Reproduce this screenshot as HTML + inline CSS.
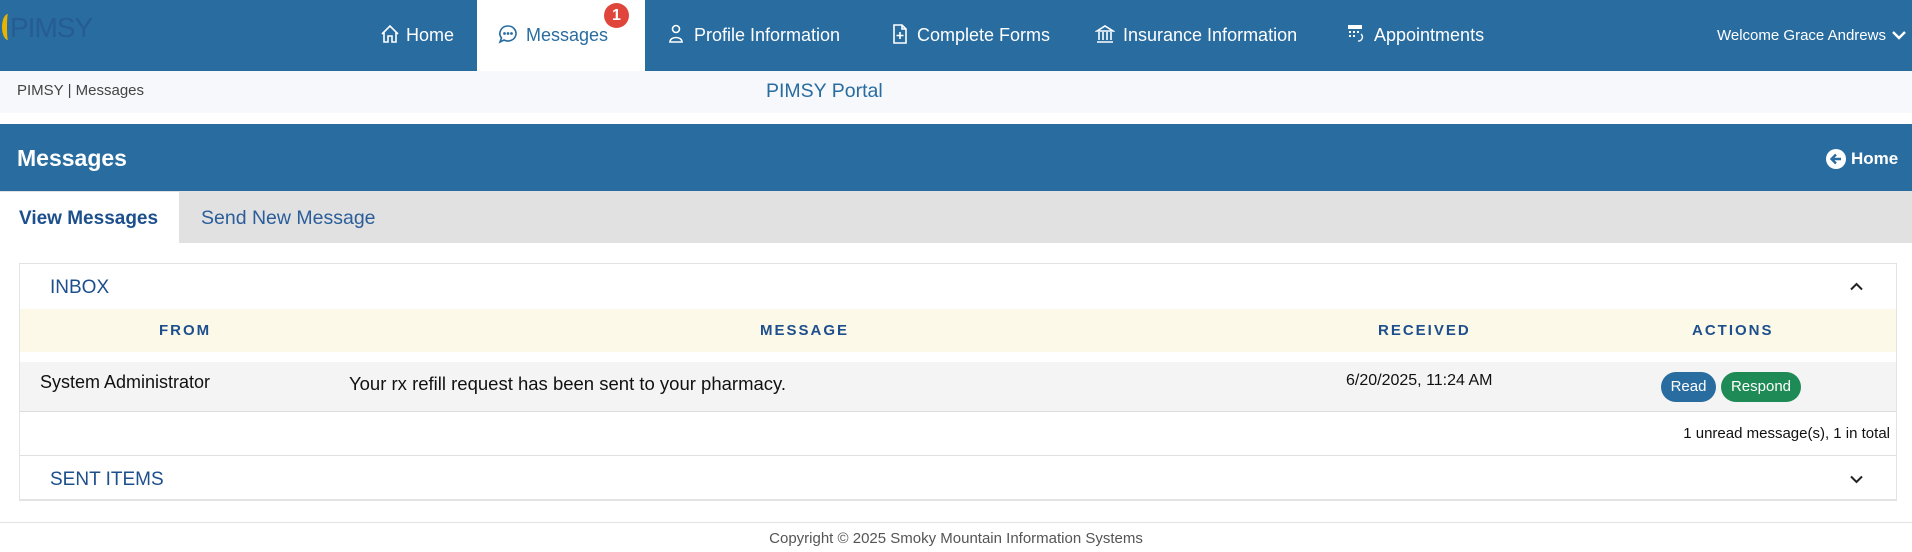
<!DOCTYPE html>
<html><head><meta charset="utf-8"><style>
*{margin:0;padding:0;box-sizing:border-box}
body{width:1912px;height:552px;position:relative;background:#fff;font-family:"Liberation Sans",Arial,sans-serif;overflow:hidden}
.a{position:absolute;white-space:nowrap}
.nav{position:absolute;left:0;top:0;width:1912px;height:71px;background:#286ca0}
.ni{position:absolute;top:24px;font-size:18px;color:#fff;line-height:22px}
.ic{position:absolute;top:24px}
.hdr{font-size:15px;font-weight:bold;color:#1d4f8c;letter-spacing:2px;top:322px;line-height:18px}
</style></head><body>
<div class="nav"></div>
<!-- logo -->
<div class="a" style="left:2px;top:14px;width:12px;height:26px;border-radius:50%;border-left:5px solid #e8b400"></div>
<div class="a" style="left:10px;top:12px;font-size:28px;color:#265c92;letter-spacing:-1px;line-height:32px">PIMSY</div>
<!-- active tab -->
<div class="a" style="left:477px;top:0;width:168px;height:71px;background:#fff"></div>
<svg class="ic" style="left:380px" width="20" height="20" viewBox="0 0 20 20" fill="none" stroke="#fff" stroke-width="1.6"><path d="M2 10L10 2l8 8M4 8v10h4v-6h4v6h4V8"/></svg>
<div class="ni" style="left:406px">Home</div>
<svg class="ic" style="left:498px" width="20" height="20" viewBox="0 0 20 20" fill="none" stroke="#286ca0" stroke-width="1.6"><path d="M10 2a8 7.5 0 1 1-4 14l-4 2 1.5-4A8 7.5 0 0 1 10 2z"/><circle cx="6.5" cy="9.5" r=".6" fill="#286ca0"/><circle cx="10" cy="9.5" r=".6" fill="#286ca0"/><circle cx="13.5" cy="9.5" r=".6" fill="#286ca0"/></svg>
<div class="ni" style="left:526px;color:#286ca0">Messages</div>
<div class="a" style="left:604px;top:3px;width:25px;height:25px;border-radius:50%;background:#e0453c;color:#fff;font-weight:bold;font-size:16px;text-align:center;line-height:25px">1</div>
<svg class="ic" style="left:667px" width="18" height="20" viewBox="0 0 18 20" fill="none" stroke="#fff" stroke-width="1.6"><circle cx="9" cy="5" r="3.5"/><path d="M3 18c0-6 12-6 12 0z"/></svg>
<div class="ni" style="left:694px">Profile Information</div>
<svg class="ic" style="left:891px" width="18" height="20" viewBox="0 0 18 20" fill="none" stroke="#fff" stroke-width="1.6"><path d="M3 1h8l4 4v14H3zM11 1v4h4M9 8v7M5.5 11.5h7"/></svg>
<div class="ni" style="left:917px">Complete Forms</div>
<svg class="ic" style="left:1095px" width="20" height="20" viewBox="0 0 20 20" fill="none" stroke="#fff" stroke-width="1.6"><path d="M2 7L10 2l8 5zM4 8v8M8 8v8M12 8v8M16 8v8M2 18h16"/></svg>
<div class="ni" style="left:1123px">Insurance Information</div>
<svg class="ic" style="left:1347px" width="20" height="20" viewBox="0 0 20 20" fill="#fff"><rect x="1" y="1" width="14" height="4"/><path d="M2 7h2v2H2zM6 7h2v2H6zM10 7h2v2h-2zM2 11h2v2H2zM6 11h2v2H6z"/><path d="M14 10a4 4 0 0 1-3 7" fill="none" stroke="#fff" stroke-width="1.4"/></svg>
<div class="ni" style="left:1374px">Appointments</div>
<div class="a" style="left:1717px;top:26px;font-size:15px;color:#fff;line-height:20px">Welcome Grace Andrews</div>
<svg class="a" style="left:1892px;top:31px" width="14" height="10" viewBox="0 0 14 10" fill="none" stroke="#fff" stroke-width="2.4"><path d="M1 1l6 6 6-6"/></svg>
<!-- breadcrumb -->
<div class="a" style="left:0;top:71px;width:1912px;height:42px;background:#f7f8fb"></div>
<div class="a" style="left:17px;top:82px;font-size:15px;color:#444;line-height:18px">PIMSY | Messages</div>
<div class="a" style="left:766px;top:80px;font-size:19.5px;color:#286ca0;line-height:22px">PIMSY Portal</div>
<!-- messages header -->
<div class="a" style="left:0;top:124px;width:1912px;height:67px;background:#286ca0"></div>
<div class="a" style="left:17px;top:145px;font-size:23px;font-weight:bold;color:#fff;line-height:26px">Messages</div>
<svg class="a" style="left:1826px;top:149px" width="20" height="20" viewBox="0 0 20 20"><circle cx="10" cy="10" r="10" fill="#fff"/><path d="M15 10H6M10 5.5L5.5 10 10 14.5" fill="none" stroke="#286ca0" stroke-width="2.4"/></svg>
<div class="a" style="left:1851px;top:149px;font-size:17px;font-weight:bold;color:#fff;line-height:20px">Home</div>
<!-- tabs -->
<div class="a" style="left:0;top:191px;width:1912px;height:52px;background:#e1e1e1"></div>
<div class="a" style="left:0;top:192px;width:179px;height:51px;background:#fff"></div>
<div class="a" style="left:19px;top:208px;font-size:19px;font-weight:bold;color:#1d4f8c;line-height:22px">View Messages</div>
<div class="a" style="left:201px;top:207px;font-size:19.5px;color:#2a5d9a;line-height:22px">Send New Message</div>
<!-- panel -->
<div class="a" style="left:19px;top:263px;width:1878px;height:238px;border:1px solid #e3e3e3;border-bottom:2px solid #e3e3e3"></div>
<div class="a" style="left:50px;top:277px;font-size:19px;color:#1d4f8c;line-height:22px">INBOX</div>
<svg class="a" style="left:1850px;top:282px" width="13" height="9" viewBox="0 0 13 9" fill="none" stroke="#222" stroke-width="2"><path d="M1 7.5l5.5-5.5 5.5 5.5"/></svg>
<div class="a" style="left:20px;top:309px;width:1876px;height:43px;background:#fdf9e9"></div>
<div class="a hdr" style="left:159px">FROM</div>
<div class="a hdr" style="left:760px">MESSAGE</div>
<div class="a hdr" style="left:1378px">RECEIVED</div>
<div class="a hdr" style="left:1692px">ACTIONS</div>
<div class="a" style="left:20px;top:362px;width:1876px;height:50px;background:#f4f4f4;border-bottom:1px solid #ddd"></div>
<div class="a" style="left:40px;top:372px;font-size:18px;color:#111;line-height:21px">System Administrator</div>
<div class="a" style="left:349px;top:373px;font-size:18.5px;color:#111;line-height:21px">Your rx refill request has been sent to your pharmacy.</div>
<div class="a" style="left:1346px;top:371px;font-size:16px;color:#111;line-height:20px">6/20/2025, 11:24 AM</div>
<div class="a" style="left:1661px;top:372px;width:55px;height:30px;border-radius:15px;background:#286ca0;color:#fff;font-size:15px;text-align:center;line-height:30px">Read</div>
<div class="a" style="left:1721px;top:372px;width:80px;height:30px;border-radius:15px;background:#1e8a55;color:#fff;font-size:15px;text-align:center;line-height:30px">Respond</div>
<div class="a" style="left:600px;top:425px;width:1290px;text-align:right;font-size:15px;color:#111;line-height:18px">1 unread message(s), 1 in total</div>
<div class="a" style="left:20px;top:455px;width:1876px;height:1px;background:#e0e0e0"></div>
<div class="a" style="left:50px;top:469px;font-size:19px;color:#1d4f8c;line-height:22px">SENT ITEMS</div>
<svg class="a" style="left:1850px;top:475px" width="13" height="9" viewBox="0 0 13 9" fill="none" stroke="#222" stroke-width="2"><path d="M1 1.5l5.5 5.5 5.5-5.5"/></svg>
<!-- footer -->
<div class="a" style="left:0;top:522px;width:1912px;height:1px;background:#e3e3e3"></div>
<div class="a" style="left:0;top:530px;width:1912px;text-align:center;font-size:15px;color:#555;line-height:18px">Copyright © 2025 Smoky Mountain Information Systems</div>
</body></html>
